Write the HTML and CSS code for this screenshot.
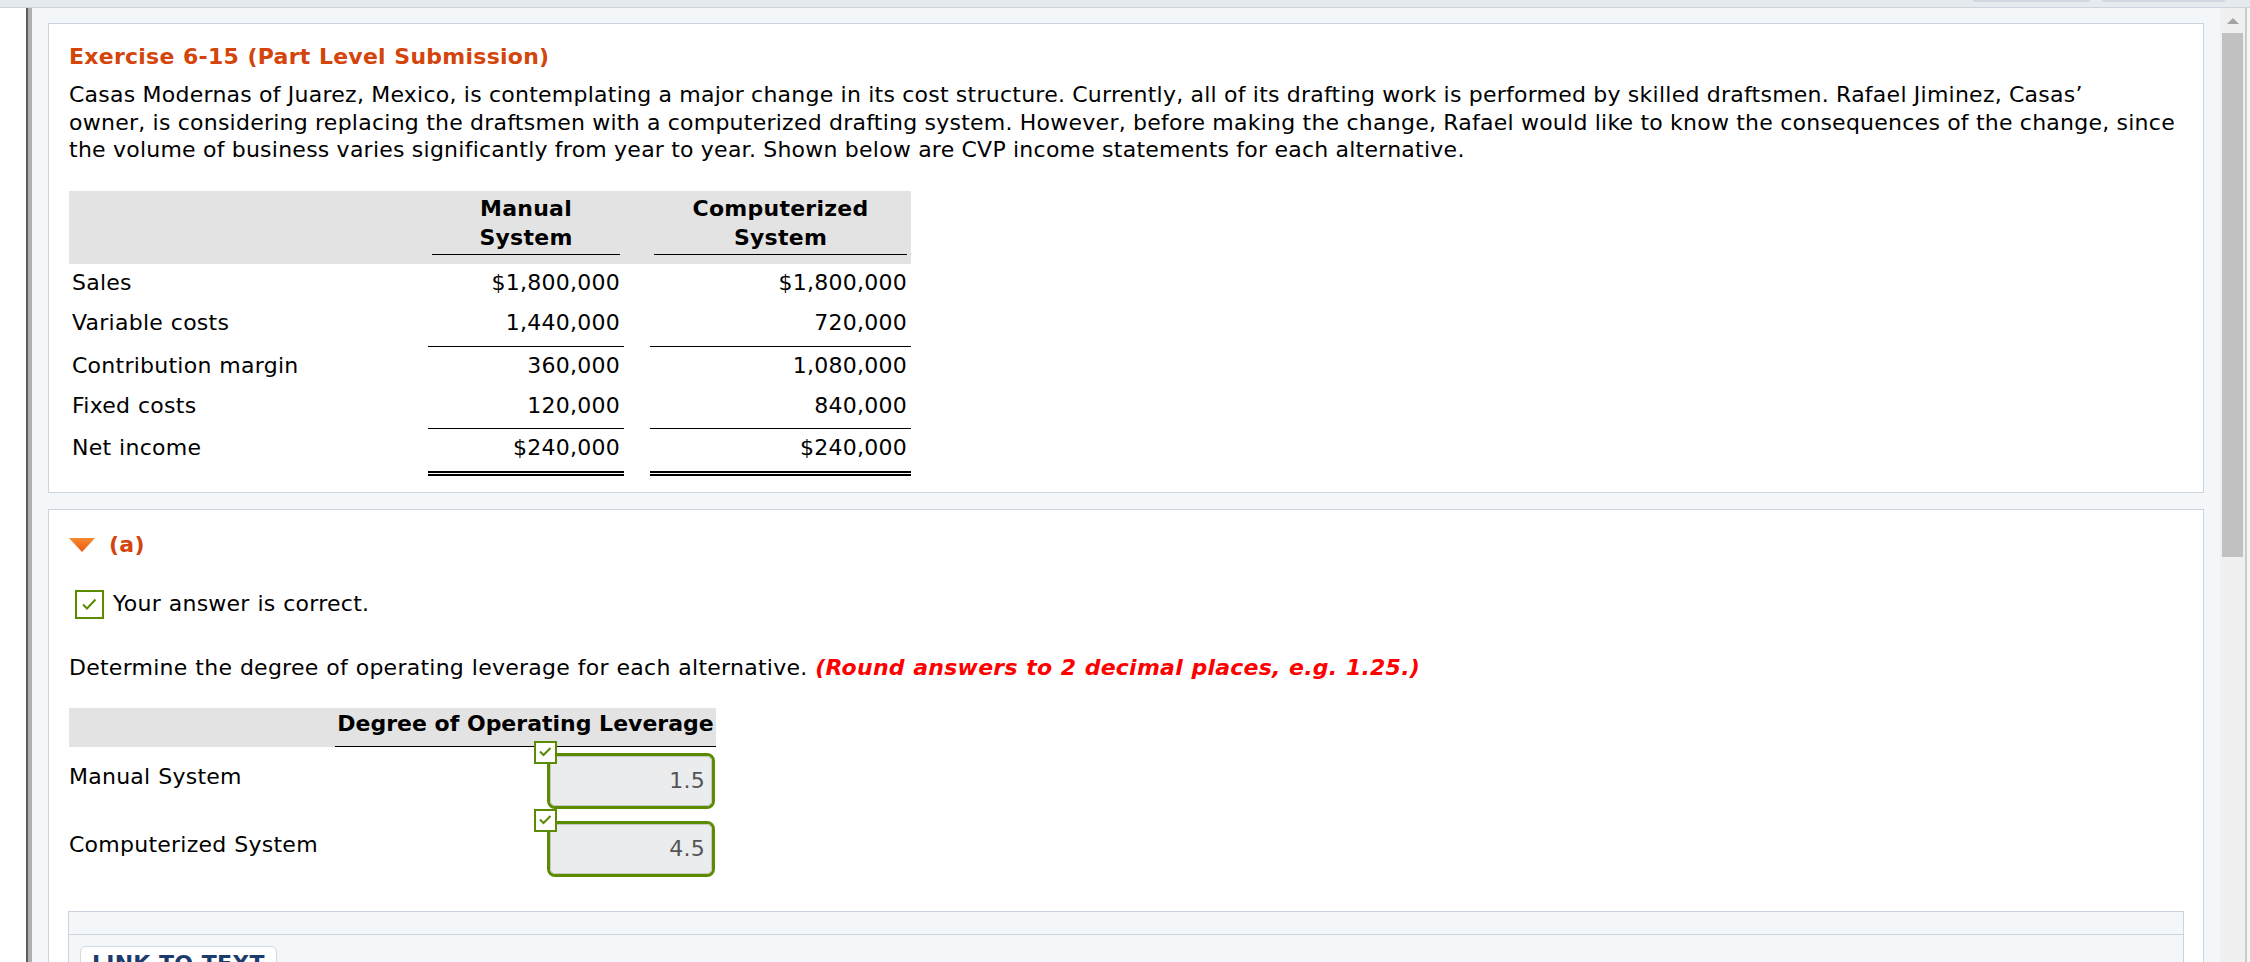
FILE: index.html
```html
<!DOCTYPE html>
<html lang="en">
<head>
<meta charset="utf-8">
<title>Exercise 6-15</title>
<link rel="stylesheet" href="styles.css">
</head>
<body>
<div class="topbar"><div class="tab tab-a"></div><div class="tab tab-b"></div></div>
<div class="frame">
  <div class="gutter"></div>
  <div class="edge"></div>
  <main class="content">
    <section class="card intro">
      <h2 class="title">Exercise 6-15 (Part Level Submission)</h2>
      <p class="lead">Casas Modernas of Juarez, Mexico, is contemplating a major change in its cost structure. Currently, all of its drafting work is performed by skilled draftsmen. Rafael Jiminez, Casas’<br>owner, is considering replacing the draftsmen with a computerized drafting system. However, before making the change, Rafael would like to know the consequences of the change, since the volume of business varies significantly from year to year. Shown below are CVP income statements for each alternative.</p>
      <div class="cvp">
        <div class="cvp-head">
          <div></div>
          <div class="h-col"><span>Manual<br>System</span></div>
          <div></div>
          <div class="h-col"><span>Computerized<br>System</span></div>
        </div>
        <div class="cvp-row r1"><div class="lbl">Sales</div><div class="num">$1,800,000</div><div></div><div class="num">$1,800,000</div></div>
        <div class="cvp-row r2"><div class="lbl">Variable costs</div><div class="num">1,440,000</div><div></div><div class="num">720,000</div></div>
        <div class="cvp-row r3"><div class="lbl">Contribution margin</div><div class="num">360,000</div><div></div><div class="num">1,080,000</div></div>
        <div class="cvp-row r4"><div class="lbl">Fixed costs</div><div class="num">120,000</div><div></div><div class="num">840,000</div></div>
        <div class="cvp-row r5"><div class="lbl">Net income</div><div class="num">$240,000</div><div></div><div class="num">$240,000</div></div>
      </div>
    </section>

    <section class="card part">
      <div class="part-head">
        <svg class="caret" width="26" height="14" viewBox="0 0 26 14"><defs><linearGradient id="cg" x1="0" y1="0" x2="0" y2="1"><stop offset="0" stop-color="#f7892e"/><stop offset="1" stop-color="#ea5a12"/></linearGradient></defs><polygon points="0,0 26,0 13,14" fill="url(#cg)"/></svg>
        <span class="part-label">(a)</span>
      </div>
      <div class="status">
        <div class="okbox"><svg width="25" height="25" viewBox="0 0 25 25"><path d="M6 12.5 L10 16.5 L18.5 7.5" fill="none" stroke="#5a8b00" stroke-width="2"/></svg></div>
        <span class="status-text">Your answer is correct.</span>
      </div>
      <p class="prompt">Determine the degree of operating leverage for each alternative. <span class="hint">(Round answers to 2 decimal places, e.g. 1.25.)</span></p>
      <div class="dol">
        <div class="dol-head"><div></div><div class="dol-h">Degree of Operating Leverage</div></div>
        <div class="dol-row">
          <div class="dol-lbl">Manual System</div>
          <div class="ans">
            <div class="badge"><svg width="19" height="19" viewBox="0 0 19 19"><path d="M4 8.5 L7.5 12 L14.5 5" fill="none" stroke="#5a8b00" stroke-width="2"/></svg></div>
            <div class="ans-field">1.5</div>
          </div>
        </div>
        <div class="dol-row">
          <div class="dol-lbl">Computerized System</div>
          <div class="ans">
            <div class="badge"><svg width="19" height="19" viewBox="0 0 19 19"><path d="M4 8.5 L7.5 12 L14.5 5" fill="none" stroke="#5a8b00" stroke-width="2"/></svg></div>
            <div class="ans-field">4.5</div>
          </div>
        </div>
      </div>
      <div class="tools">
        <div class="tools-bar"></div>
        <div class="tools-body"><span class="btn">LINK TO TEXT</span></div>
      </div>
    </section>
  </main>
  <div class="scrollbar"><div class="arrow"></div><div class="thumb"></div></div>
  <div class="rightedge"></div>
</div>
</body>
</html>
```

FILE: styles.css
```css
html, body { margin: 0; padding: 0; }
body {
  width: 2250px;
  height: 962px;
  overflow: hidden;
  background: #fff;
  font-family: "DejaVu Sans", Verdana, sans-serif;
  font-size: 22px;
  letter-spacing: 0.25px;
  word-spacing: 0.5px;
  color: #000;
}
.topbar {
  height: 7px;
  background: #e6e9ed;
  border-bottom: 1px solid #cdd3da;
  display: flex;
  justify-content: flex-end;
  gap: 12px;
  padding-right: 25px;
}
.tab { height: 2px; background: #cfd6df; border-radius: 0 0 6px 6px; }
.tab-a { width: 117px; }
.tab-b { width: 123px; }

.frame { display: flex; height: 954px; }
.gutter { width: 26px; background: #fff; }
.edge { width: 4px; border-left: 2px solid #5e5e5e; background: #b0b0b0; }
.content {
  flex: 1;
  min-width: 0;
  background: #f4f7fa;
  padding: 15px 16px 0;
  overflow: hidden;
}
.scrollbar {
  width: 25px;
  background: #f0f0f0;
  display: flex;
  flex-direction: column;
  align-items: center;
}
.arrow {
  margin-top: 10px;
  width: 0; height: 0;
  border-left: 6px solid transparent;
  border-right: 6px solid transparent;
  border-bottom: 6px solid #a3a3a3;
}
.thumb { margin-top: 9px; width: 21px; height: 524px; background: #c1c1c1; }
.rightedge { width: 5px; box-sizing: border-box; border-left: 2px solid #cbcbcb; background: #f7f7f7; }

.card { background: #fff; border: 1px solid #cad3de; }
.intro { padding: 19px 19px 16px 20px; }
.title { margin: 0; font-size: 22px; line-height: 28px; font-weight: bold; color: #d4450c; }
.lead { margin: 10px 0 0; line-height: 27.5px; word-spacing: -0.2px; }

.cvp { margin-top: 27px; width: 842px; }
.cvp-head, .cvp-row { display: grid; grid-template-columns: 359px 196px 26px 261px; }
.cvp-head { background: #e3e3e3; height: 73px; }
.h-col { text-align: center; font-weight: bold; line-height: 29px; padding-top: 3px; }
.h-col span { display: block; margin: 0 4px; padding-bottom: 2px; border-bottom: 1px solid #000; }
.cvp-row > div { box-sizing: border-box; padding-top: 5px; line-height: 28px; }
.lbl { padding-left: 3px; }
.num { text-align: right; padding-right: 4px; }
.r1 { height: 40px; }
.r2 { height: 43px; }
.r3 { height: 40px; }
.r4 { height: 42px; }
.r5 { height: 47px; }
.r2 .num, .r4 .num { border-bottom: 1px solid #000; }
.r5 .num { border-bottom: 5px double #000; }

.part { margin-top: 16px; padding: 21px 19px 0 20px; height: 600px; }
.part-head { display: flex; align-items: center; gap: 14px; height: 28px; }
.caret { display: block; }
.part-label { font-weight: bold; color: #d4450c; line-height: 28px; }
.status { display: flex; align-items: center; margin-top: 31px; height: 29px; }
.okbox {
  width: 29px; height: 29px; box-sizing: border-box;
  border: 2px solid #5a8b00; margin-left: 6px; background: #fff;
}
.okbox svg { display: block; }
.status-text { margin-left: 9px; line-height: 28px; }
.prompt { margin: 35px 0 0; line-height: 27.5px; }
.hint { color: #ff0000; font-weight: bold; font-style: italic; }

.dol { margin-top: 27px; width: 647px; }
.dol-head, .dol-row { display: grid; grid-template-columns: 266px 381px; }
.dol-head { background: #e3e3e3; height: 39px; }
.dol-h {
  font-weight: bold; text-align: center; white-space: nowrap;
  letter-spacing: 0; word-spacing: 0;
  line-height: 29px; padding-top: 1px; box-sizing: border-box;
  border-bottom: 1px solid #000;
}
.dol-row { height: 68px; }
.dol-lbl { padding-top: 16px; line-height: 28px; }
.ans {
  justify-self: end; align-self: start;
  margin-top: 6px; margin-right: 1px;
  position: relative;
  width: 168px; height: 56px; box-sizing: border-box;
  border: 3px solid #5a8b00; border-radius: 8px;
}
.ans-field {
  height: 100%; box-sizing: border-box;
  border: 1px solid #c6c6c6; border-radius: 5px;
  background: #ebecee; color: #555;
  text-align: right; padding-right: 6px; line-height: 48px;
}
.badge {
  position: absolute; left: -16px; top: -15px;
  width: 23px; height: 23px; box-sizing: border-box;
  border: 2px solid #5a8b00; background: #fff;
}
.badge svg { display: block; }

.tools { margin: 28px 0 0 -1px; border: 1px solid #cad3de; background: #f4f7fa; }
.tools-bar { height: 22px; border-bottom: 1px solid #cad3de; }
.tools-body { padding: 11px 11px 40px; }
.btn {
  display: inline-block;
  border: 1px solid #d5d8dc; border-radius: 6px; background: #fff;
  padding: 4px 11px 10px;
  font-weight: bold; color: #1d3c6e; line-height: 26px;
}
```
